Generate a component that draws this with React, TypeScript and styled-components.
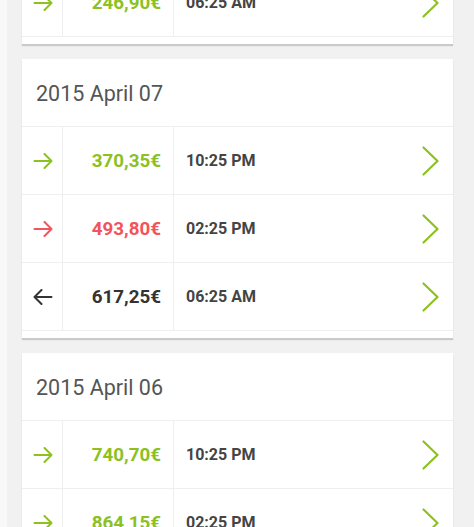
import React from "react";
import styled, { createGlobalStyle } from "styled-components";

const GlobalStyle = createGlobalStyle`
  html, body {
    margin: 0;
    padding: 0;
    overflow: hidden;
  }
  body {
    background: linear-gradient(to right, #f8f8f8 0, #f8f8f8 7px, #f1f1f1 7px);
    font-family: Roboto, "Liberation Sans", Arial, sans-serif;
    -webkit-font-smoothing: antialiased;
  }
`;

type Kind = "out" | "alert" | "in";

const colors: Record<Kind, string> = {
  out: "#8cc11f",
  alert: "#f2545b",
  in: "#333333",
};

const Feed = styled.main`
  display: flex;
  flex-direction: column;
  gap: 15px;
  margin-top: -235px;
  padding: 0 21px 0 22px;
`;

const DayCard = styled.section`
  background: #ffffff;
  padding-bottom: 7px;
  box-shadow: 0 2px 1px rgba(0, 0, 0, 0.16);
`;

const DayHeader = styled.h2`
  margin: 0;
  height: 65px;
  padding-top: 2px;
  border-bottom: 1px solid #efefef;
  display: flex;
  align-items: center;
  padding-left: 14px;
  font-size: 21.5px;
  font-weight: 400;
  color: #555555;
`;

const TxRow = styled.div`
  display: grid;
  grid-template-columns: 41px 111px 1fr auto;
  height: 67px;
  border-bottom: 1px solid #efefef;
`;

const IconCell = styled.div<{ $kind: Kind }>`
  display: flex;
  align-items: center;
  justify-content: center;
  border-right: 1px solid #efefef;
  color: ${(p) => colors[p.$kind]};
  padding-left: 1px;
`;

const AmountCell = styled.div<{ $kind: Kind }>`
  display: flex;
  align-items: center;
  justify-content: flex-end;
  padding-right: 12px;
  border-right: 1px solid #efefef;
  font-size: 18.8px;
  font-weight: 700;
  color: ${(p) => colors[p.$kind]};
`;

const TimeCell = styled.div`
  display: flex;
  align-items: center;
  padding-left: 12px;
  font-size: 16px;
  font-weight: 700;
  color: #444444;
`;

const ChevronCell = styled.div`
  display: flex;
  align-items: center;
  padding-right: 14px;
  color: #8cc11f;
`;

const Arrow = ({ dir }: { dir: "right" | "left" }) => (
  <svg
    width="20"
    height="16"
    viewBox="0 0 20 16"
    fill="none"
    stroke="currentColor"
    strokeWidth="2"
    strokeLinecap="round"
    strokeLinejoin="round"
    style={dir === "left" ? { transform: "scaleX(-1)" } : undefined}
  >
    <path d="M1.5 8H18.5M11.5 1L18.5 8L11.5 15" />
  </svg>
);

const Chevron = () => (
  <svg
    width="17"
    height="30"
    viewBox="0 0 17 30"
    fill="none"
    stroke="currentColor"
    strokeWidth="2.2"
    strokeLinecap="round"
    strokeLinejoin="round"
  >
    <path d="M1.5 1.5L15.5 15L1.5 28.5" />
  </svg>
);

type Tx = { kind: Kind; amount: string; time: string };
type Day = { date: string; items: Tx[] };

const days: Day[] = [
  {
    date: "2015 April 08",
    items: [
      { kind: "out", amount: "123,45€", time: "10:25 PM" },
      { kind: "alert", amount: "185,15€", time: "02:25 PM" },
      { kind: "out", amount: "246,90€", time: "06:25 AM" },
    ],
  },
  {
    date: "2015 April 07",
    items: [
      { kind: "out", amount: "370,35€", time: "10:25 PM" },
      { kind: "alert", amount: "493,80€", time: "02:25 PM" },
      { kind: "in", amount: "617,25€", time: "06:25 AM" },
    ],
  },
  {
    date: "2015 April 06",
    items: [
      { kind: "out", amount: "740,70€", time: "10:25 PM" },
      { kind: "out", amount: "864,15€", time: "02:25 PM" },
      { kind: "in", amount: "987,60€", time: "06:25 AM" },
    ],
  },
];

export default function App() {
  return (
    <>
      <GlobalStyle />
      <Feed>
        {days.map((day) => (
          <DayCard key={day.date}>
            <DayHeader>{day.date}</DayHeader>
            {day.items.map((tx) => (
              <TxRow key={tx.amount}>
                <IconCell $kind={tx.kind}>
                  <Arrow dir={tx.kind === "in" ? "left" : "right"} />
                </IconCell>
                <AmountCell $kind={tx.kind}>{tx.amount}</AmountCell>
                <TimeCell>{tx.time}</TimeCell>
                <ChevronCell>
                  <Chevron />
                </ChevronCell>
              </TxRow>
            ))}
          </DayCard>
        ))}
      </Feed>
    </>
  );
}
